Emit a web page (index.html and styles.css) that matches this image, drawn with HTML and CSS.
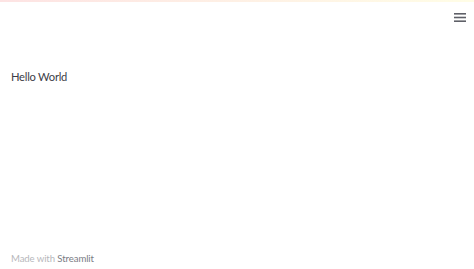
FILE: index.html
```html
<!DOCTYPE html>
<html lang="en">
<head>
  <meta charset="UTF-8">
  <meta name="viewport" content="width=device-width, initial-scale=1.0">
  <title>Streamlit</title>
  <link rel="stylesheet" href="styles.css">
</head>
<body>
  <div class="decoration"></div>
  <header class="toolbar">
    <button class="menu-button" aria-label="Menu">
      <svg width="12" height="9" viewBox="0 0 12 9">
        <rect x="0" y="0" width="12" height="1.6" fill="#5f6068"/>
        <rect x="0" y="3.7" width="12" height="1.6" fill="#5f6068"/>
        <rect x="0" y="7.4" width="12" height="1.6" fill="#5f6068"/>
      </svg>
    </button>
  </header>

  <main class="main">
    <p class="text">Hello World</p>
  </main>

  <footer class="footer">
    Made with <a href="#">Streamlit</a>
  </footer>
</body>
</html>
```

FILE: styles.css
```css
html, body {
  height: 100%;
}
body {
  margin: 0;
  font-family: Lato, "Noto Sans", sans-serif;
  background: #fff;
  color: #31333f;
  display: flex;
  flex-direction: column;
}
.decoration {
  height: 2px;
  background: linear-gradient(90deg, #fde3e3, #fffde6);
}
.toolbar {
  display: flex;
  justify-content: flex-end;
  padding: 9px 6px 0 0;
}
.menu-button {
  border: none;
  background: none;
  padding: 2px;
  display: flex;
  cursor: pointer;
}
.main {
  flex: 1;
  padding: 0 11px;
}
.text {
  margin: 46px 0 0;
  font-size: 11.2px;
  letter-spacing: -0.25px;
  color: #3c3d47;
}
.footer {
  padding: 0 11px 5px;
  font-size: 9.6px;
  color: #b7b8bc;
  letter-spacing: -0.1px;
}
.footer a {
  color: #7a7c84;
  text-decoration: none;
}
```
